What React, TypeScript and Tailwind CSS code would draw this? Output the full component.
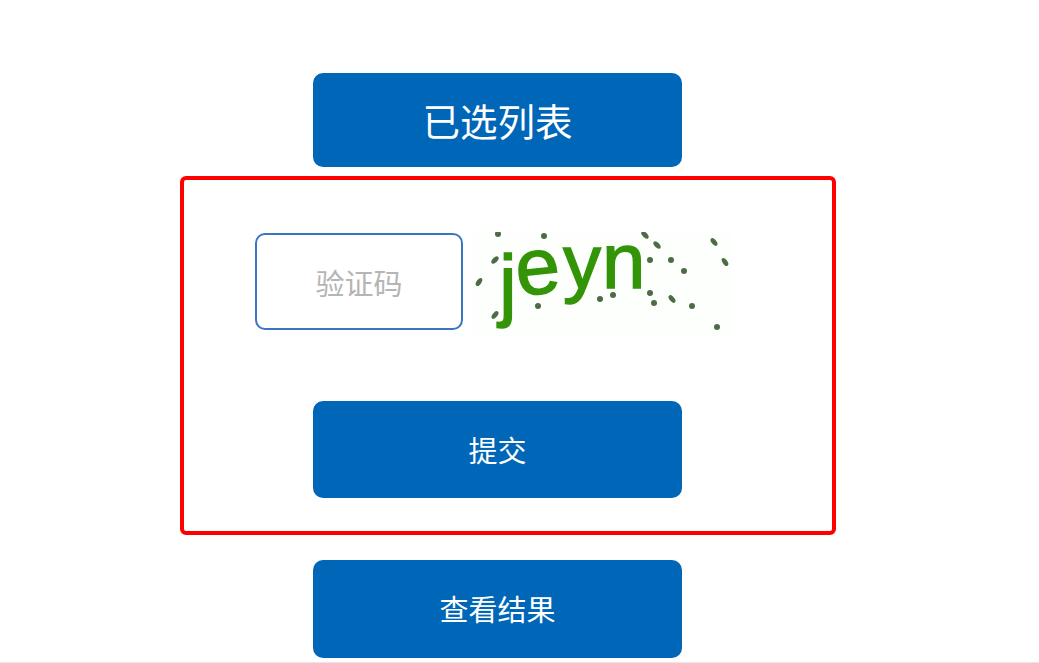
const font = { fontFamily: '"Noto Sans CJK SC", "Liberation Sans", sans-serif' }

const dots = [
  [498, 234, 0], [544, 236, 0], [645, 235, 45], [657, 245, 45], [714, 242, 50], [725, 262, 55],
  [650, 260, 0], [671, 260, 0], [684, 271, 0], [650, 293, 0], [613, 295, 0], [600, 299, 0],
  [654, 303, 0], [672, 299, 50], [692, 306, 0], [538, 306, 0], [717, 327, 0], [495, 260, -45],
  [479, 282, -55], [495, 315, -50],
]

function BlueButton({ children, className }: { children: string; className: string }) {
  return (
    <button className={`w-[369px] ml-[313px] flex items-center justify-center rounded-[10px] bg-[#0066b8] text-white ${className}`}>
      {children}
    </button>
  )
}

function Captcha() {
  return (
    <svg width="259" height="106" viewBox="472 232 259 106" className="bg-[#fdfffd] shrink-0 -mt-px">
      <g fill="#339408" stroke="#339408" strokeWidth="1.4" fontFamily='"Liberation Sans", sans-serif' fontSize="80">
        <text x="499" y="311">j</text>
        <text transform="translate(518 296) rotate(-6)">e</text>
        <text x="563" y="288" fontSize="76">y</text>
        <text x="602" y="288" fontSize="78">n</text>
      </g>
      <g fill="#4d6b45">
        {dots.map(([x, y, r]) => (
          <ellipse key={`${x}-${y}`} cx={x} cy={y} rx={r ? 4.5 : 3} ry={r ? 2.4 : 3} transform={`rotate(${r} ${x} ${y})`} />
        ))}
      </g>
    </svg>
  )
}

export default function App() {
  return (
    <div className="h-[663px] overflow-hidden bg-white pt-[73px] border-b border-[#e8e8e8]" style={font}>
      <BlueButton className="h-[94px] text-[37.5px]">已选列表</BlueButton>

      <div className="w-[656px] h-[359px] ml-[180px] mt-[9px] border-4 border-[#ff0000] rounded-[6px] pt-[53px]">
        <div className="flex items-start gap-[9px] pl-[71px]">
          <input
            placeholder="验证码"
            className="w-[208px] h-[97px] border-2 border-[#3a75c4] rounded-[10px] text-center text-[29px] placeholder:text-[#b5b5b5] outline-none"
          />
          <Captcha />
        </div>
        <BlueButton className="h-[97px] text-[29px] !ml-[129px] mt-[63px]">提交</BlueButton>
      </div>

      <BlueButton className="h-[98px] text-[29px] mt-[25px]">查看结果</BlueButton>
    </div>
  )
}
